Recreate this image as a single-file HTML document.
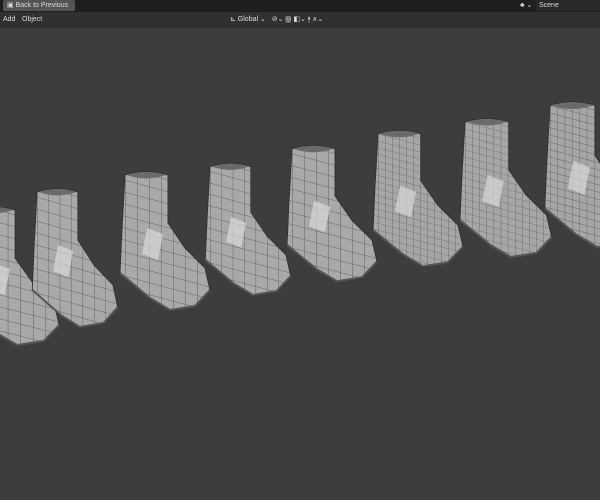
<!DOCTYPE html>
<html><head><style>
body{margin:0;width:600px;height:500px;overflow:hidden;background:#3d3d3d;font-family:"Liberation Sans",sans-serif;font-size:7px;color:#ddd}
.t1{position:absolute;left:0;top:0;width:600px;height:12px;background:#1f1f1f}
.t2{position:absolute;left:0;top:12px;width:600px;height:16px;background:#303030}
.btn{position:absolute;background:#545454;border-radius:2px;padding:1px 4px}
</style></head><body>
<div class="t1"></div><div class="t2"></div>
<div class="btn" style="left:3px;top:0;height:9px;width:64px;line-height:9px">▣ Back to Previous</div>
<div style="position:absolute;left:520px;top:1px">♣ ⌄</div>
<div style="position:absolute;left:536px;top:0;width:64px;height:11px;background:#282828;padding-left:3px;line-height:11px">Scene</div>
<div style="position:absolute;left:3px;top:16px">Add</div>
<div style="position:absolute;left:22px;top:16px">Object</div>
<div style="position:absolute;left:230px;top:15px;line-height:10px">⊾ Global ⌄ &nbsp; ⊘⌄ <span style="background:#555">◎</span> ◧⌄ <span style="background:#555">•</span> ∧⌄</div>
<svg width="600" height="500" style="position:absolute;left:0;top:0">
<defs>
<pattern id="g" width="12" height="12" patternUnits="userSpaceOnUse" patternTransform="skewY(15)">
<rect width="12" height="12" fill="#a9a9a9"/><path d="M0 0H12M0 0V12" stroke="#505050" stroke-width="0.8"/>
</pattern>
<pattern id="g2" width="7" height="7" patternUnits="userSpaceOnUse" patternTransform="skewY(15)">
<rect width="7" height="7" fill="#a6a6a6"/><path d="M0 0H7M0 0V7" stroke="#4e4e4e" stroke-width="0.6"/>
</pattern>
<g id="f">
<path d="M0,7 Q21,0 43,7 L43,55 L60,80 L80,100 L85,122 L70,138 L45,142 L25,130 L-5,105 L-3,60 Z" stroke="#333" stroke-width="1"/>
<path d="M2,7 Q21,14 41,7 Q21,1 2,7Z" fill="#6a6a6a"/>
<path d="M22,60 L38,66 L33,92 L17,86Z" fill="#dadada" opacity=".7"/>
<path d="M-5,105 L25,130 L45,142 L70,138 L85,122" fill="none" stroke="#555" stroke-width="2"/>
</g>
</defs>
<use href="#f" fill="url(#g)" transform="translate(-30,203) scale(1.05,1)"/>
<use href="#f" fill="url(#g)" transform="translate(37,185) scale(0.95,1)"/>
<use href="#f" fill="url(#g)" transform="translate(125,168)"/>
<use href="#f" fill="url(#g)" transform="translate(210,160) scale(0.95,0.95)"/>
<use href="#f" fill="url(#g)" transform="translate(292,142) scale(1,0.98)"/>
<use href="#f" fill="url(#g2)" transform="translate(378,127) scale(1,0.98)"/>
<use href="#f" fill="url(#g2)" transform="translate(465,115) scale(1.02,1)"/>
<use href="#f" fill="url(#g2)" transform="translate(550,98) scale(1.05,1.05)"/>
</svg>
</body></html>
